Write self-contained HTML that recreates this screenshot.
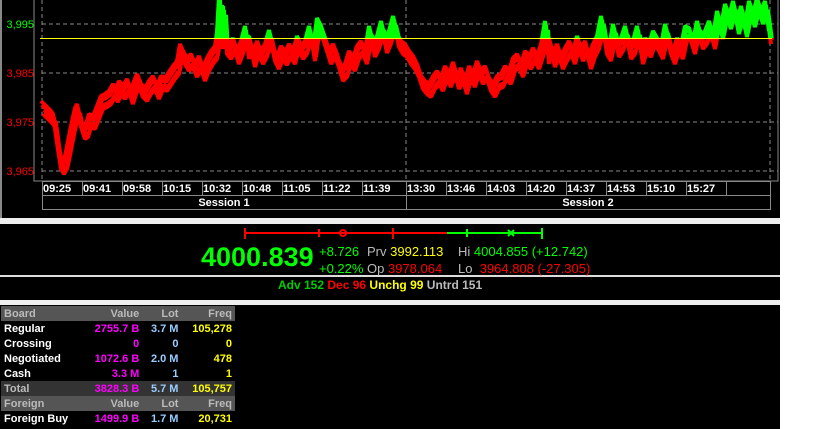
<!DOCTYPE html>
<html><head><style>
body{margin:0;width:816px;height:429px;background:#fff;position:relative;overflow:hidden;font-family:"Liberation Sans",Arial,sans-serif}
.p{position:absolute;background:#000;left:0;width:780px}
.t{position:absolute;white-space:nowrap}
table{border-collapse:collapse;font-size:11px;font-weight:bold;position:absolute;left:1px;top:306px;width:234px}
td{height:15px;padding:0 3px;text-align:right}
td:first-child{text-align:left;color:#fff}
.h td{background:#555;color:#bbb}
.tot td{background:#333}
.m{color:#f0f}.l{color:#9cf}.y{color:#ff0}
</style></head><body>
<div class="p" style="top:0;height:218px;border-left:2px solid #888;box-sizing:border-box"></div>
<div style="position:absolute;left:0;top:218px;width:780px;height:6px;background:#eee"></div>
<div class="p" style="top:224px;height:51px"></div>
<div style="position:absolute;left:0;top:275px;width:780px;height:2px;background:#ddd"></div>
<div class="p" style="top:277px;height:23px"></div>
<div style="position:absolute;left:0;top:300px;width:780px;height:5px;background:#eee"></div>
<div class="p" style="top:305px;height:124px"></div>
<svg style="position:absolute;left:0;top:0" width="780" height="218">
<defs><clipPath id="a"><rect x="0" y="0" width="780" height="38"/></clipPath><clipPath id="b"><rect x="0" y="38" width="780" height="200"/></clipPath>
<polyline id="pl" fill="none" stroke-width="4" stroke-linejoin="bevel" points="42,105 52,115 54,118 57,140 60,160 63,165 66,160 68,150 70,140 73,125 76,112 78,108 80,118 84,130 87,128 90,118 94,120 98,110 102,100 106,98 110,95 114,88 117,93 120,85 124,90 128,83 132,95 135,85 138,78 142,88 146,92 150,85 154,80 158,90 162,80 166,82 170,76 174,70 178,65 181,48 184,55 188,62 192,58 196,68 200,60 204,72 208,62 212,55 216,50 218,36 220,0 222,40 224,10 226,45 230,50 234,42 238,55 242,45 246,30 248,50 250,40 254,58 258,45 262,55 266,48 270,34 274,52 278,60 282,50 286,56 290,48 294,55 298,40 302,50 306,45 310,30 312,40 314,52 318,22 322,30 326,42 330,55 334,48 338,58 342,72 346,68 350,55 354,62 358,50 362,45 366,55 370,30 374,48 378,40 382,25 386,44 390,35 394,20 398,38 402,45 406,48 410,55 414,60 418,68 422,80 426,85 430,88 434,80 438,75 442,82 446,70 450,78 454,66 458,80 462,72 466,85 470,70 474,78 478,65 482,75 486,70 490,82 494,88 498,80 502,78 506,70 510,75 514,62 518,58 522,68 526,55 530,60 534,52 538,60 542,48 546,25 548,55 550,42 554,58 558,48 562,60 566,52 570,45 574,55 578,40 582,52 586,45 590,60 594,48 598,40 602,20 606,45 610,52 614,28 618,48 622,42 626,30 630,50 634,45 638,30 642,55 646,42 650,48 654,35 658,42 662,50 666,28 670,45 674,55 678,42 682,50 686,30 690,32 694,45 698,25 702,40 706,35 710,25 714,40 718,15 722,30 726,8 730,20 734,5 738,25 742,10 746,28 750,5 754,18 758,2 762,15 766,5 770,35"/>
<g id="thick"><use href="#pl"/><use href="#pl" transform="translate(2,5)"/><use href="#pl" transform="translate(-1,-4)"/><use href="#pl" transform="translate(1,9)"/></g>
</defs>
<g stroke="#888" stroke-dasharray="4,3" fill="none"><line x1="42" y1="24" x2="778" y2="24"/><line x1="42" y1="73" x2="778" y2="73"/><line x1="42" y1="122" x2="778" y2="122"/><line x1="42" y1="171" x2="778" y2="171"/><line x1="42" y1="0" x2="42" y2="181"/><line x1="406" y1="0" x2="406" y2="181"/><line x1="770" y1="0" x2="770" y2="181"/></g>
<g stroke="#888" fill="none"><polyline points="34,0 34,181 778,181 778,0"/><rect x="42.5" y="181.5" width="728" height="28"/><line x1="42" y1="195.5" x2="770" y2="195.5"/><line x1="406.5" y1="181" x2="406.5" y2="209"/>
<path d="M82.5 181v14M122.5 181v14M162.5 181v14M202.5 181v14M242.5 181v14M282.5 181v14M322.5 181v14M362.5 181v14M446.5 181v14M486.5 181v14M526.5 181v14M566.5 181v14M606.5 181v14M646.5 181v14M686.5 181v14M726.5 181v14"/></g>
<use href="#thick" stroke="#0f0" clip-path="url(#a)"/>
<use href="#thick" stroke="#f00" clip-path="url(#b)"/>
<line x1="40" y1="38.5" x2="772" y2="38.5" stroke="#ff0"/>
<g font-size="11" text-anchor="end"><text x="34" y="28" fill="#0f0">3,995</text><text x="34" y="77" fill="#f00">3,985</text><text x="34" y="126" fill="#f00">3,975</text><text x="34" y="175" fill="#f00">3,965</text></g>
<g font-size="11" font-weight="bold" fill="#fff"><text x="43" y="192">09:25</text><text x="83" y="192">09:41</text><text x="123" y="192">09:58</text><text x="163" y="192">10:15</text><text x="203" y="192">10:32</text><text x="243" y="192">10:48</text><text x="283" y="192">11:05</text><text x="323" y="192">11:22</text><text x="363" y="192">11:39</text><text x="407" y="192">13:30</text><text x="447" y="192">13:46</text><text x="487" y="192">14:03</text><text x="527" y="192">14:20</text><text x="567" y="192">14:37</text><text x="607" y="192">14:53</text><text x="647" y="192">15:10</text><text x="687" y="192">15:27</text>
<text x="224" y="206" text-anchor="middle">Session 1</text><text x="588" y="206" text-anchor="middle">Session 2</text></g>
</svg>
<svg style="position:absolute;left:0;top:224px" width="780" height="20">
<g stroke-width="2" fill="none"><line x1="245" y1="9" x2="447" y2="9" stroke="#f00"/><line x1="447" y1="9" x2="542" y2="9" stroke="#0f0"/>
<path d="M245 4v11M319 5v8M393 4v11" stroke="#f00"/><circle cx="343" cy="9" r="3" stroke="#f00"/>
<path d="M467 5v8M542 4v11M508 6l6 6M514 6l-6 6" stroke="#0f0"/></g></svg>
<div class="t" style="left:201px;top:242px;font-size:27px;font-weight:bold;color:#0f0">4000.839</div>
<div class="t" style="left:319px;top:243px;font-size:13px;line-height:17px;color:#0f0">+8.726<br>+0.22%</div>
<div class="t" style="left:367px;top:243px;font-size:13px;line-height:17px;color:#bbb">Prv <span style="color:#ff0">3992.113</span><br>Op <span style="color:#f00">3978.064</span></div>
<div class="t" style="left:458px;top:243px;font-size:13px;line-height:17px;color:#bbb">Hi <span style="color:#0f0">4004.855 (+12.742)</span><br>Lo &nbsp;<span style="color:#f00">3964.808 (-27.305)</span></div>
<div class="t" style="left:278px;top:278px;font-size:12px;font-weight:bold"><span style="color:#0c0">Adv 152</span> <span style="color:#f00">Dec 96</span> <span style="color:#ff0">Unchg 99</span> <span style="color:#bbb">Untrd 151</span></div>
<table>
<tr class="h"><td style="color:#bbb">Board</td><td>Value</td><td>Lot</td><td>Freq</td></tr>
<tr><td>Regular</td><td class="m">2755.7 B</td><td class="l">3.7 M</td><td class="y">105,278</td></tr>
<tr><td>Crossing</td><td class="m">0</td><td class="l">0</td><td class="y">0</td></tr>
<tr><td>Negotiated</td><td class="m">1072.6 B</td><td class="l">2.0 M</td><td class="y">478</td></tr>
<tr><td>Cash</td><td class="m">3.3 M</td><td class="l">1</td><td class="y">1</td></tr>
<tr class="tot"><td style="color:#bbb">Total</td><td class="m">3828.3 B</td><td class="l">5.7 M</td><td class="y">105,757</td></tr>
<tr class="h"><td style="color:#bbb">Foreign</td><td>Value</td><td>Lot</td><td>Freq</td></tr>
<tr><td>Foreign Buy</td><td class="m">1499.9 B</td><td class="l">1.7 M</td><td class="y">20,731</td></tr>
</table>
</body></html>
